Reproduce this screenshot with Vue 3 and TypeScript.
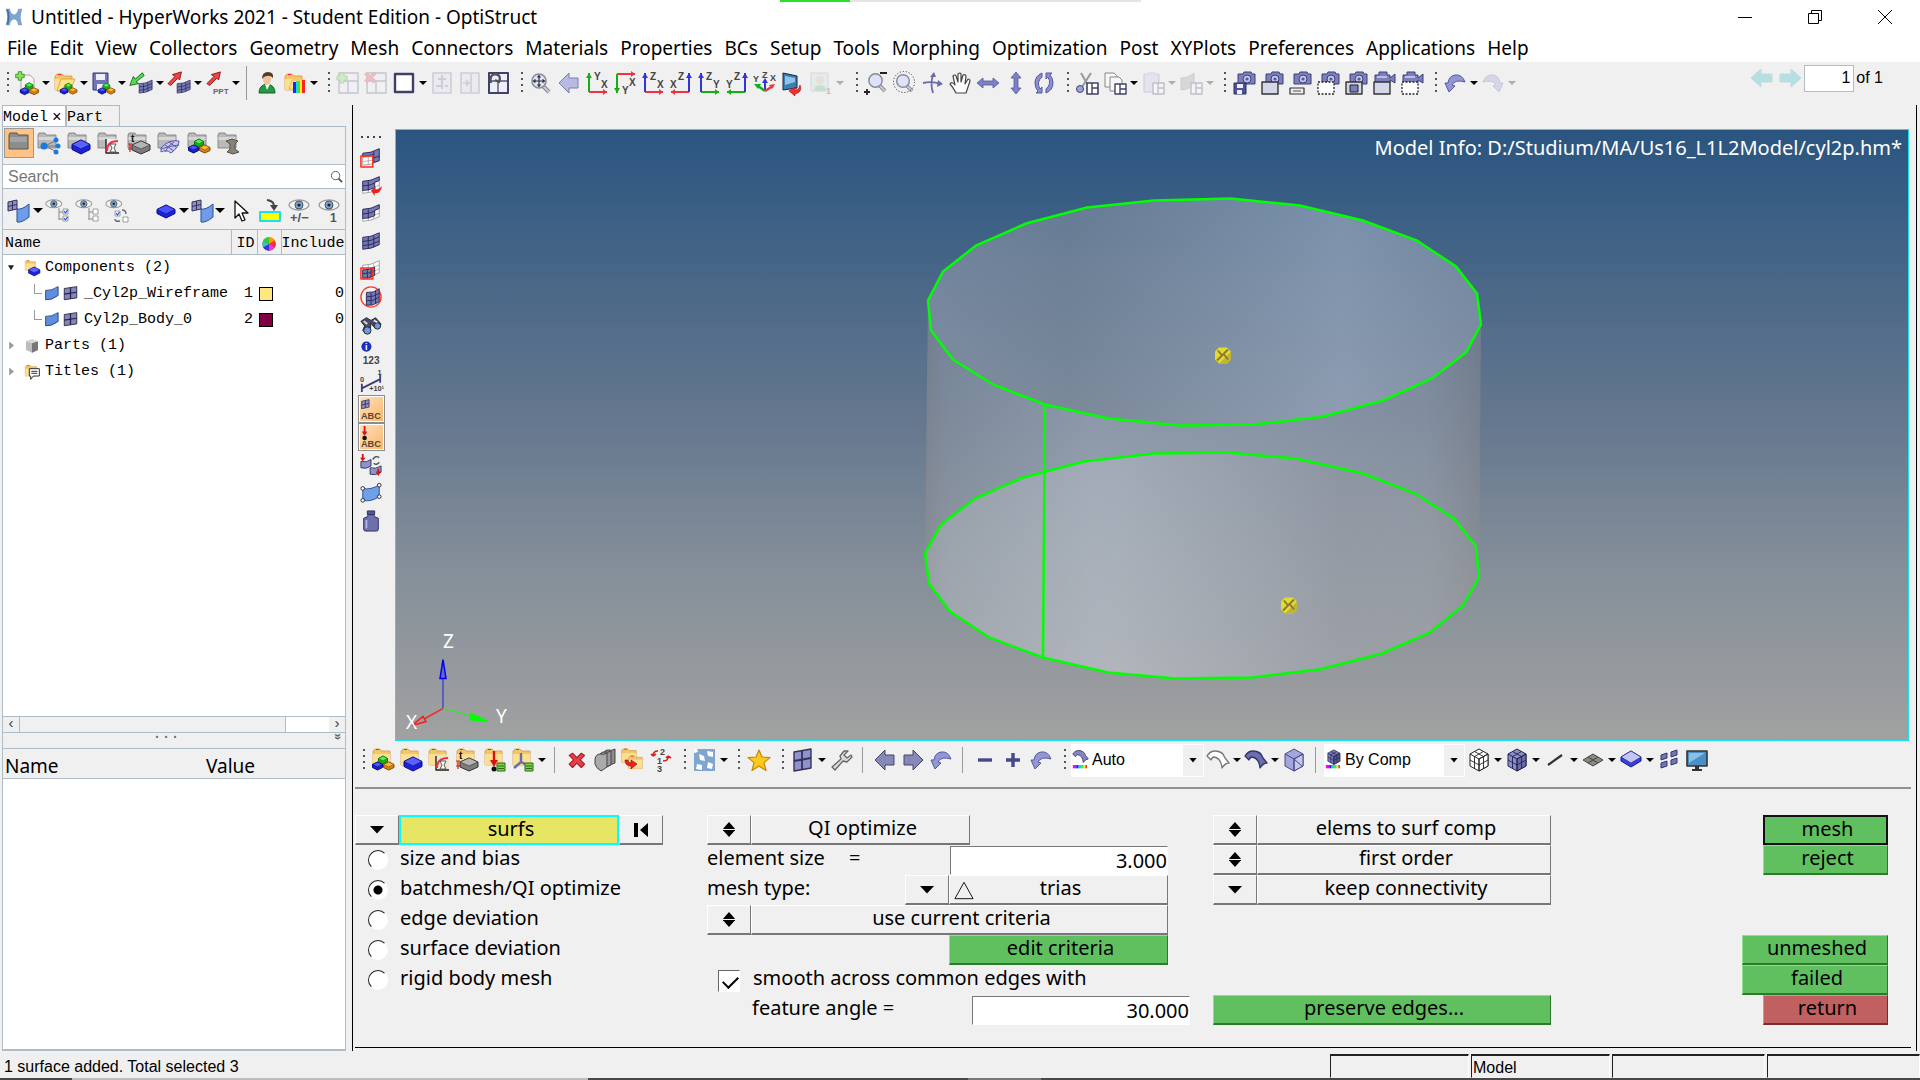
<script setup lang="ts">
import { ref } from 'vue'

type Item =
  | { kind: 'icon'; icon: string; label: string; dim?: boolean }
  | { kind: 'caret'; dim?: boolean }
  | { kind: 'handle' | 'sep' | 'gap' }
  | { kind: 'combo'; icon: string; label: string; width: number; options: string[] }

const icon = (name: string, label: string, dim = false): Item => ({ kind: 'icon', icon: name, label, dim })
const caret: Item = { kind: 'caret' }
const caretDim: Item = { kind: 'caret', dim: true }
const handle: Item = { kind: 'handle' }
const sep: Item = { kind: 'sep' }
const gap: Item = { kind: 'gap' }

/* ---------- icon drawing helpers, all on a 24 x 24 grid ---------- */
const at = (x: number, y: number, s: number, body: string) => `<g transform="translate(${x} ${y}) scale(${s})">${body}</g>`
const path = (d: string, fill: string, stroke = 'none', w = 1) =>
  `<path d="${d}" fill="${fill}" stroke="${stroke}" stroke-width="${w}" stroke-linejoin="round"/>`
const label = (x: number, y: number, size: number, text: string, fill = '#444') =>
  `<text x="${x}" y="${y}" font-size="${size}" font-weight="bold" font-family="Liberation Sans, sans-serif" fill="${fill}">${text}</text>`
const slab = (x: number, y: number, w: number, h: number, d: number, top: string, side: string, edge: string) =>
  path(`M${x} ${y + h / 2}l${w / 2} ${-h / 2}l${w / 2} ${h / 2}v${d}l${-w / 2} ${h / 2}l${-w / 2} ${-h / 2}z`, side, edge) +
  path(`M${x} ${y + h / 2}l${w / 2} ${-h / 2}l${w / 2} ${h / 2}l${-w / 2} ${h / 2}z`, top, edge, 0.6)

const blueSlab = slab(5, 9, 18, 9, 5, '#5a62ff', '#1c22d8', '#0a0a80')
const greySlab = slab(5, 10, 18, 8, 5, '#b4b4b4', '#7c7c7c', '#333')
const trio =
  slab(7.5, 8, 9, 5, 3, '#52ee52', '#17b517', '#0a700a') +
  slab(1.5, 14, 10, 5, 3, '#4a55ff', '#1a22cc', '#0a0a80') +
  slab(12.5, 14, 10.5, 5, 3, '#ffb43c', '#d88510', '#804800')
const folder = path('M2 3l2-2h5l2 2h8v14H2z', '#f3c667', '#d39a3d', 0.8) + path('M2 6h17v11H2z', '#fbdf95') + path('M5 1.5h3', 'none', '#e24', 1)
const greyFolder = path('M1 4l1-2h6l1 2h10v13H1z', '#b9b9b9', '#777', 0.8) + path('M1.5 6h17v3h-17z', '#d6d6d6')
const mesh = (fill = '#7678b4', edge = '#26285a') =>
  path('M3 8q9 0 18-5v13q-9 5-18 5z', fill, edge) + path('M9 7.500v13M15 6v13M3 12.500q9 0 18-5M3 17q9 0 18-5', 'none', edge)
const meshHalf =
  path('M3 8q9 0 18-5v13q-9 5-18 5z', '#fff', '#888', 0.8) + path('M9 7.500v13M15 6v13M3 12.500q9 0 18-5M3 17q9 0 18-5', 'none', '#999', 0.8)
const surf = path('M1 7q5 1 12-5v13q-7 6-12 5z', '#6f9be8', '#27509a')
const gridTile = path('M2 4l9-2v9l-9 2z', '#8f8fc4', '#333358') + path('M6.500 3v9M2 8.500l9-2', 'none', '#333358')
const greenPlus = path('M2 5h3V2h4v3h3v4H9v3H5V9H2z', '#8be05a', '#2f8f1e')
const redCross = path('M2 4l3-2 4 4 4-4 3 2-4 4 4 4-3 3-4-4-4 4-3-3 4-4z', '#e8404a', '#a81822')
const redArrow = path('M1 14l8-8-3-2 10-3-2 9-2-2-8 8z', '#f04444', '#8c1010')
const greenArrow = path('M16 2l-8 7-2-3-4 10 10-2-3-2 9-7z', '#57d957', '#146a14')
const winFrame = path('M3 2h19v20H3z', '#eef', '#55557a', 1.4) + path('M3 10h19M12 10v12', 'none', '#55557a', 1.4)
const lens = path('M14 15l6 6', 'none', '#888', 4) + path('M14 15l6 6', 'none', '#c9c9e6', 2)
const magnifier = lens + '<circle cx="10" cy="10" r="7" fill="#dfe2fb" stroke="#8a8a98" stroke-width="1.600"/>'
const camera = path('M6 3h5l1-2h7l1 2h3v10H6z', '#7d7fbd', '#3d3f78') + '<circle cx="15" cy="8" r="4" fill="#c3c5ea" stroke="#3d3f78"/><circle cx="15" cy="8" r="1.600" fill="#55589a"/>'
const video = path('M3 4h4V1h8v3h3v3l5-4v9l-5-3v3H3z', '#7d7fbd', '#3d3f78') + path('M5 6h10', 'none', '#d6d8f4', 1.4)
const undoShape = path('M2 12l4 9 6-6-3-1q3-6 13-3-3-8-10-7-6 1-7 8z', '#9396d6', '#5557a0')
const eye = '<ellipse cx="11" cy="6" rx="10" ry="5" fill="#f2f2f2" stroke="#999" stroke-width="1.300"/><circle cx="11" cy="6" r="4" fill="#7fa4cf" stroke="#456"/><circle cx="11" cy="6" r="1.600" fill="#223"/>'
const box = (x: number, y: number, on: boolean) =>
  path(`M${x} ${y}h5v5h-5z`, '#fff', '#888', 0.8) + (on ? path(`M${x + 1} ${y + 2}l1.500 2 2-3`, 'none', '#1d4fd0', 1.2) : '')
const cubeFrame = (fill: string, side: string, edge: string) =>
  path('M12 1l9 5v12l-9 5-9-5V6z', fill, edge) + path('M12 11l9-5v12l-9 5z', side, edge) + path('M3 6l9 5 9-5M12 11v12', 'none', edge)
const cubeGrid = (fill: string, side: string, edge: string) =>
  cubeFrame(fill, side, edge) + path('M7.500 3.500l9 5v12M16.500 3.500l-9 5v12M3 12l9 5 9-5', 'none', edge, 0.9)
const spectrum =
  '<rect x="1" y="18" width="4" height="4" fill="#f0f"/><rect x="5" y="18" width="3" height="4" fill="#22f"/><rect x="8" y="18" width="3" height="4" fill="#0dd"/><rect x="11" y="18" width="3" height="4" fill="#3e3"/><rect x="14" y="18" width="2" height="4" fill="#ee2"/><rect x="16" y="18" width="2" height="4" fill="#f33"/>'
const axes = (h: string, v: string, hc: string, vc: string, left: boolean, down = false) => {
  const x = left ? 20 : 4
  const y = down ? 3 : 21
  const hx = left ? 2 : 22
  const vy = down ? 22 : 2
  const a = left ? 4 : -4
  const b = down ? -5 : 5
  return (
    path(`M${x} ${y}H${hx}`, 'none', hc, 2) + path(`M${hx} ${y}l${a} -3v6z`, hc) +
    path(`M${x} ${y}V${vy}`, 'none', vc, 2) + path(`M${x} ${vy}l-3 ${b}h6z`, vc) +
    label(left ? 1 : 16, down ? 15 : 17, 10, h) + label(9, down ? 23 : 9, 10, v)
  )
}
const R = '#ee3340'
const G = '#12b012'
const B = '#3434d8'
const abcTile = label(1, 23, 10, 'ABC', '#5a4632')
const curve = (fill: string, edge: string) => path('M1 8q3-5 8-5 8 0 10 7l4 5q-4 0-7 5Q15 10 8 9q-2 0-3 3z', fill, edge, 1.3)

const icons: Record<string, string> = {
  logo: path('M2 2h5q1 6 5 7 4-1 5-7h5q-2 6-2 10t2 10h-5q-1-7-5-7t-5 7H2q2-6 2-10T2 2z', '#7fa5cf') + path('M4 3q3 9 0 18', 'none', '#3f6ea5', 2),
  newModel: path('M6 4h9l4 4v14H6z', '#f4f4f4', '#aaa') + at(-1, -1, 0.85, greenPlus) + at(4, 5, 0.85, trio),
  open: at(0, 2, 1, folder) + path('M4 20l4-12h14l-5 12z', '#ffe28a', '#d39a3d', 0.8) + at(6, 6, 0.78, trio),
  save: path('M2 2h15v17H2z', '#7276b8', '#33366c') + path('M5 3h9v6H5zM6 13h8v6H6z', '#eef') + at(6, 6, 0.78, trio),
  importIcon: at(8, 7, 0.72, mesh()) + at(-1, 0, 0.9, greenArrow),
  exportIcon: at(8, 7, 0.72, mesh()) + at(0, 0, 0.9, redArrow),
  ppt: at(1, 0, 0.9, redArrow) + label(8, 23, 8, 'PPT', '#666'),
  user: path('M4 22q0-8 8-9 8 1 8 9z', '#249a44', '#12602a') + path('M10 13l2 6 3-6z', '#fff') + '<ellipse cx="12" cy="8" rx="4" ry="6" fill="#eec39a"/>' + path('M7 8q0-7 6-7t5 6q-3-3-6-2-3 0-5 3z', '#5a3a20'),
  results: at(0, 2, 1, folder) + path('M6 18l3-9h13l-4 9z', '#ffe28a', '#d39a3d', 0.6) + path('M10 11h3v11h-3z', '#22f') + path('M13 10h2v12h-2z', '#1dd') + path('M15 10h2v12h-2z', '#4d4') + path('M17 9h2v13h-2z', '#fe2') + path('M19 9h3v13h-3z', '#f22'),
  winAdd: winFrame + at(-1, 0, 1, greenPlus),
  winDel: winFrame + at(-1, 0, 0.8, redCross),
  page: path('M3 3h18v18H3z', '#fff', '#3f4168', 2.4),
  winArrange: path('M3 2h18v20H3z', '#dcdcf0', '#77779a', 1.6) + path('M12 4v14M8 8h8M6 15h6m3 0h3', 'none', '#77779a', 2),
  winSwap: path('M3 2h18v20H3z', '#dcdcf0', '#77779a', 1.6) + path('M13 3v18M5 12h6m-3-3l3 3-3 3', 'none', '#77779a', 1.6),
  winCycle: winFrame + path('M3 2h19v20H3z', 'none', '#3f4168', 2) + path('M5 12q-2-8 4-9 7 1 4 8l-4-2', 'none', '#555', 2.4),
  fit: magnifier + path('M10 5v10M5 10h10M8.500 6.500l1.500-2 1.500 2M8.500 13.500l1.500 2 1.500-2M6.500 8.500l-2 1.500 2 1.500M13.500 8.500l2 1.500-2 1.500', 'none', '#333', 1.2),
  back: path('M2 12L12 2v5h9v10h-9v5z', '#b8bae4', '#7c7eae'),
  forward: path('M22 12L12 2v5H3v10h9v5z', '#8688b8', '#44466e'),
  backDark: path('M2 12L12 2v5h9v10h-9v5z', '#8688b8', '#44466e'),
  xyTop: axes('X', 'Y', R, G, false),
  xyBottom: axes('X', 'Y', R, G, false, true),
  xzLeft: axes('X', 'Z', R, B, false),
  xzRight: axes('X', 'Z', R, B, true),
  yzLeft: axes('Y', 'Z', G, B, false),
  yzRight: axes('Y', 'Z', G, B, true),
  iso: path('M12 19V9', 'none', B, 2) + path('M9 12l3-5 3 5z', B) + path('M12 20l-7-5', 'none', G, 2.4) + path('M1 13l7 0-3 5z', G) + path('M12 20l8-5', 'none', R, 2.4) + path('M22 13l-6 1 3 4z', R) + label(0, 11, 9, 'Y') + label(9, 7, 9, 'Z') + label(17, 10, 9, 'X'),
  screenRed: path('M2 2l14 3v12L2 19z', '#3b7fb6', '#223') + path('M4 5l10 2v4L4 14z', '#8fc5ea') + path('M8 20l6-4v3q4 0 5-5 3 7-5 9v2z', '#f03030', '#a01010', 0.6),
  portrait: path('M2 2h17v18H2z', '#bfe0ea', '#99a') + path('M5 20q0-6 6-6t6 6z', '#6ab27a') + '<circle cx="11" cy="9" r="4" fill="#d8b890"/>' + label(17, 23, 9, '1'),
  zoomPm: at(2, 0, 0.95, magnifier) + path('M16 2h7M0 21h6M3 18v6', 'none', '#222', 1.8),
  zoomCircle: at(2, 1, 0.9, magnifier) + '<circle cx="12" cy="11" r="10.500" fill="none" stroke="#222" stroke-dasharray="1 2"/>',
  rotate: path('M13 4q-3 9 0 18M3 12q9-2 18 1', 'none', '#6a6ca6', 1.8) + path('M10 6l4-5 2 5zM18 9l5 4-6 3z', '#6a6ca6'),
  hand: path('M8 22q-3-6-6-9 2-3 5 1L5 5q2-2 3 0l2 6V3q2-2 3 0v8l2-7q2-1 3 1l-1 8 3-5q2 0 2 2l-4 12z', '#fff', '#444', 1.2),
  horiz: path('M1 12l6-5v3h10V7l6 5-6 5v-3H7v3z', '#7d80c6', '#5557a0', 0.8),
  vert: path('M12 1l5 6h-3v10h3l-5 6-5-6h3V7H7z', '#7d80c6', '#5557a0', 0.8),
  spin: path('M10 2q-7 3-7 10 0 5 3 8l-2 2h6v-6l-2 2q-4-7 2-12z', '#8b8ed0', '#5557a0') + path('M14 22q7-3 7-10 0-5-3-8l2-2h-6v6l2-2q4 7-2 12z', '#8b8ed0', '#5557a0'),
  cut: path('M6 2l8 14M16 2L7 16', 'none', '#999', 2) + '<circle cx="5" cy="18" r="3.500" fill="#9aa4dd" stroke="#446"/>' + path('M12 12h11v11H12z', '#fff', '#3f4168', 1.6) + path('M17 12v11m0-6h6', 'none', '#3f4168', 1.4),
  copy: path('M2 2h9l3 3v11H2z', '#f7f7f7', '#888') + path('M7 6h9l3 3v11H7z', '#f7f7f7', '#888') + path('M12 13h11v10H12z', '#fff', '#3f4168', 1.4) + path('M17 13v10m0-5h6', 'none', '#3f4168', 1.4),
  paste: path('M3 3h15v18H3z', '#c4c6ec', '#77a') + path('M7 1h7v4H7z', '#bbc') + path('M12 12h11v11H12z', '#fff', '#3f4168', 1.4) + path('M17 12v11m0-6h6', 'none', '#3f4168', 1.4),
  pasteMesh: path('M2 7q8 0 13-5v12q-6 5-13 5z', '#999', '#777') + path('M12 12h11v11H12z', '#fff', '#3f4168', 1.4) + path('M17 12v11m0-6h6', 'none', '#3f4168', 1.4),
  camSave: camera + path('M2 12h12v11H2z', '#4e5196', '#2b2d60') + path('M5 13h6v4H5zM5 19h5v4H5z', '#eef'),
  camPage: camera + path('M2 11h16v12H2z', '#d2d8e8', '#333', 1.4),
  camKey: camera + path('M2 17h14v6H2z', '#eee', '#333', 1.2) + path('M5 20h8', 'none', '#555'),
  camDash: camera + '<path d="M2 11h16v12H2z" fill="#fff" stroke="#222" stroke-width="1.300" stroke-dasharray="2 1.500"/>',
  camInner: camera + path('M2 11h16v12H2z', '#d2d8e8', '#333', 1.4) + path('M6 14h8v7H6z', '#7d7fbd', '#223'),
  vidPage: video + path('M2 11h16v12H2z', '#d2d8e8', '#333', 1.4),
  vidDash: video + '<path d="M2 11h16v12H2z" fill="#fff" stroke="#222" stroke-width="1.300" stroke-dasharray="2 1.500"/>',
  undo: undoShape,
  redo: `<g transform="translate(24 0) scale(-1 1)">${undoShape}</g>`,
  prevPage: path('M1 12L11 3v5h11v8H11v5z', '#9ed8dc', '#a9d3d8'),
  nextPage: path('M23 12L13 3v5H2v8h11v5z', '#9ed8dc', '#a9d3d8'),

  fPlain: path('M2 4l1-2h7l1 2h10v14H2z', '#8d8d8d', '#555') + path('M3 6h17v5H3z', '#a4a4a4'),
  fNodes: greyFolder + path('M8 15l12-6M8 15h13M8 15l12 6', 'none', '#777') + '<circle cx="7" cy="15" r="3.500" fill="#1a7ae0"/><circle cx="19" cy="9" r="2.500" fill="#1a7ae0"/><circle cx="21" cy="15" r="2.500" fill="#1a7ae0"/><circle cx="19" cy="21" r="2.500" fill="#1a7ae0"/>',
  fBlock: greyFolder + blueSlab,
  fMat: greyFolder + path('M9 8h13v15H9z', '#eee') + path('M9 8v14h13', 'none', '#222', 1.4) + path('M10 20q0-10 11-10', 'none', R, 2) + path('M13 13h6l-2 4 2 4h-6l2-4z', '#fff', '#555'),
  fProp: greyFolder + greySlab + label(4, 11, 10, 't', '#111') + path('M3 13v8M1 13h4M1 18h4', 'none', '#c22', 1.2),
  fMesh: greyFolder + path('M4 17q8-9 18-7 0 6-8 12-5-4-10-1z', '#c8c8f2', '#5a5aa6') + path('M8 14l9 6M12 11l7 5M8 21q3-7 9-10M4 18q8-3 18-4', 'none', '#5a5aa6'),
  fTrio: greyFolder + trio,
  fBeam: greyFolder + path('M9 10l6-2 6 2-3 3v5l4 3-6 2-6-2 3-3v-5z', '#8a807c', '#554'),

  surfMesh: at(10, 3, 1, surf) + at(0, -1, 1, gridTile),
  eyeOn: at(-1, 0, 0.8, eye) + path('M13 9v12M13 13h4M13 20h4', 'none', '#888') + box(17, 10, true) + box(17, 17, true),
  eyeOff: at(-1, 0, 0.8, eye) + path('M13 9v12M13 13h4M13 20h4', 'none', '#888') + box(17, 10, false) + box(17, 17, false),
  eyeFlip: at(-1, 0, 0.8, eye) + box(9, 12, true) + box(17, 18, false) + path('M16 11q4 0 4 4M9 20q0 3 5 2', 'none', '#666', 1.4),
  block: slab(3, 6, 18, 9, 4, '#4a52ff', '#1c22d8', '#0a0a80'),
  cursor: path('M7 2v17l4-4 3 7 3-1-3-7h6z', '#fff', '#111', 1.3),
  highlight: path('M2 13h20v9H2z', '#ffff00', '#18e0f0', 2) + path('M9 1q7 1 7 6', 'none', '#444', 2) + path('M12 6h8l-4 6z', '#444'),
  eyePm: eye + label(2, 23, 13, '+/−', '#555'),
  eyeOne: eye + label(12, 23, 12, '1', '#555'),
  wheel: '<circle cx="12" cy="12" r="10" fill="#e33"/>' + path('M12 12V2a10 10 0 0 1 8.700 5z', '#f90') + path('M12 12l8.700-5a10 10 0 0 1 0 10z', '#e33') + path('M12 12l8.700 5a10 10 0 0 1-8.700 5z', '#e3e') + path('M12 12v10a10 10 0 0 1-8.700-5z', '#33e') + path('M12 12l-8.700 5a10 10 0 0 1 0-10z', '#2cc') + path('M12 12L3.300 7A10 10 0 0 1 12 2z', '#3c3'),
  rowComp: at(0, 0, 0.9, folder) + at(2, 2, 0.95, blueSlab),
  rowSurf: path('M1 7q9 1 20-6v14q-10 8-20 7z', '#5f8ee0', '#223f7a', 1.4),
  rowMesh: path('M2 4l20-3v18L2 22z', '#8585bb', '#222244', 1.4) + path('M12 2.500v18M2 13l20-3', 'none', '#222244', 2),
  rowPart: path('M12 2l9 3v13l-9 4-9-4V5z', '#bdbdbd') + path('M12 6l9-1v13l-9 4z', '#777') + path('M3 5l9-3 9 3-9 3z', '#d8d8d8'),
  rowTitle: at(0, 1, 1, folder) + path('M8 7h15v11H14l-4 5v-5H8z', '#fff', '#222', 1.4) + path('M11 11h9M11 14h9', 'none', '#222', 1.4),

  mMaskBox: meshHalf + path('M3 8q9 0 18-5v13l-6 2V9q-6 2-12 2z', '#7678b4', '#26285a') + path('M15 13l6-2M15 6v3', 'none', '#26285a') + path('M1 11h13v12H1z', 'none', '#ff2a10', 1.6),
  mMaskRed: meshHalf + path('M3 8q9 0 18-5v4l-5 2v6q-7 3-13 3z', '#7678b4', '#26285a') + path('M9 8v10M3 13q7 0 13-3', 'none', '#26285a') + path('M12 18l5-4v3q4 0 7-4-1 8-8 8v3z', '#f02020'),
  mMaskHalf: meshHalf + path('M3 8q9 0 18-5v4l-5 2v6q-7 3-13 3z', '#7678b4', '#26285a') + path('M9 8v10M3 13q7 0 13-3', 'none', '#26285a'),
  mMesh: mesh(),
  mUnmask: meshHalf + path('M3 13q8 0 13-3v9q-6 4-13 3z', '#7678b4', '#26285a') + path('M8 13v9M12 12v9M3 17q8 0 13-3', 'none', '#26285a') + path('M1 11h13v12H1z', 'none', '#ff2a10', 1.6),
  mCircle: '<circle cx="12" cy="12" r="11" fill="#f4f4f4" stroke="#ff3a28" stroke-width="1.500"/>' + path('M7 7q8 1 14-4v14q-6 5-14 4z', '#7678b4', '#26285a') + path('M12 7v14M17 5v14M7 12q8 0 14-4M7 16q8 1 14-4', 'none', '#26285a'),
  binoc: path('M1 8l6-4 5 3 5-3 6 7-3 5-5-2-3-4-1 9-5 2-3-3 2-5z', '#4a4a6c', '#222') + '<circle cx="8" cy="18" r="4" fill="#6f9bd8" stroke="#222"/><circle cx="19" cy="13" r="3.500" fill="#6f9bd8" stroke="#222"/>' + path('M4 8l4 3M15 7l4 2', 'none', '#ddd', 2),
  info123: '<circle cx="7" cy="5" r="5.500" fill="#1c2fb8"/>' + label(5.5, 9, 10, 'i', '#fff') + label(3, 24, 11, '123'),
  scaleBar: path('M2 15v9M22 5v9M2 20L22 10', 'none', '#3d3f78', 2) + label(0, 13, 8, '0') + label(19, 5, 8, '1') + label(10, 23, 8, '+10¹'),
  abcMesh: abcTile + at(0, 0, 0.9, gridTile),
  abcLoad: abcTile + path('M5 0v9', 'none', '#d11', 2) + path('M2 6h6l-3 5z', '#d11') + '<circle cx="5" cy="13" r="2.500" fill="#111"/>',
  loads: path('M1 8q6 2 11-2v7q-5 4-11 2z', '#8f92cc', '#333358') + path('M11 15q6 2 12-2v7q-6 4-12 2z', '#8f92cc', '#333358') + path('M3 0v6M20 16v5', 'none', '#d11', 2) + path('M0 4h6l-3 4zM17 19h6l-3 5z', '#d11') + path('M14 6q3-5 7-2M21 9q-3 4-6 1', 'none', '#555', 1.6),
  surfPts: path('M3 7q9 2 18-4v13q-9 6-18 4z', '#6f9fe6', '#27509a') + '<g fill="#fff" stroke="#222"><circle cx="3" cy="7" r="2"/><circle cx="21" cy="3.500" r="2"/><circle cx="3" cy="20" r="2"/><circle cx="21" cy="16" r="2"/></g>',
  bottle: path('M8 1h8v4H8z', '#55588c', '#2b2d60') + path('M9 5h6q0 3 5 4v12q0 2-2 2H6q-2 0-2-2V9q5-1 5-4z', '#6d70aa', '#2b2d60') + path('M7 11v9', 'none', '#b5b7e4', 2),

  yTrio: folder + trio,
  yBlock: folder + blueSlab,
  yMat: folder + path('M9 8h13v15H9z', '#f0e6cf') + path('M9 8v14h13', 'none', '#222', 1.4) + path('M10 20q0-10 11-10', 'none', R, 2) + path('M13 13h6l-2 4 2 4h-6l2-4z', '#fff', '#555'),
  yProp: folder + greySlab + label(4, 11, 10, 't', '#111') + path('M3 13v8M1 13h4M1 18h4', 'none', '#c22', 1.2),
  yLoad: folder + path('M11 3v12', 'none', '#d11', 2.4) + path('M7 12h8l-4 7z', '#d11') + '<circle cx="11" cy="21" r="2.500" fill="#111"/>' + path('M14 15h8v8h-8z', '#7ad04a', '#2a6a10') + path('M15 18h6M15 20.500h6', 'none', '#2a6a10'),
  yAxis: folder + path('M10 5v9l-7 6M10 14l6 3', 'none', '#6a6ca6', 2.4) + path('M14 15h8v8h-8z', '#7ad04a', '#2a6a10') + path('M15 18h6M15 20.500h6', 'none', '#2a6a10'),
  del: at(2, 3, 1.1, redCross),
  cards: path('M10 7q1-5 5-5 4 1 7-1v14q-4 1-8 4z', '#8a8a8a', '#444') + path('M6 9q1-5 5-5 4 1 7-1v14q-4 1-8 4z', '#9a9a9a', '#444') + path('M2 11q1-5 5-5 4 1 7-1v14q-4 3-6 4-5-3-6-7z', '#aaa', '#444'),
  moveFolder: at(-1, 0, 0.85, folder) + at(6, 7, 0.8, folder) + path('M4 12q0 6 6 6v3l6-5-6-4v3q-3 0-3-3z', '#f02020', '#900', 0.6),
  order: label(11, 7, 9, '2') + label(8, 16, 9, '1') + label(8, 24, 9, '3') + path('M9 3q-5 0-5 5m0 0l-2-2m2 2l3-2M14 13q6 0 5-5m0 0l-2 2m2-2l3 2', 'none', '#e01818', 1.6),
  tiles: path('M1 1h21v22H1z', '#7ea6cf') + path('M6 6l5 2 1 5-5-1zM14 3l6 1 0 5-5-1zM15 14l5 2-1 5-5-1zM4 16l5 1v5l-6-1zM1 1h3l1 3-4 1z', '#fff'),
  star: path('M12 2l3 7 8 .600-6 5 2 8-7-4.600L5 22.600l2-8-6-5L9 9z', '#ffc81e', '#c48a00', 1.2),
  bigGrid: path('M3 4l17-3v19L3 23z', '#8f92cc', '#333358', 1.4) + path('M11 3v19M3 13l17-3', 'none', '#333358', 1.8),
  wrench: path('M15 3l-4 5 1 3-9 8 3 3 8-9 4 1 5-5-1-2-4 3-3-3 4-4z', '#d9d9d9', '#666', 1.3),
  minus: path('M5 12h14', 'none', '#44478a', 3.4),
  plus: path('M5 12h14M12 5v14', 'none', '#44478a', 3.4),
  curveWhite: curve('#fff', '#777'),
  curveFill: curve('#6a6dae', '#33356a'),
  cubeGlass: cubeFrame('#a3a6dc', '#c6c8ea', '#44478a') + path('M12 11l9 8', 'none', '#44478a'),
  autoIcon: at(0, -2, 0.85, curve('#8486c2', '#3c3e74')) + spectrum,
  compIcon: at(1, -1, 0.8, cubeGrid('#7679ba', '#55588f', '#22244e')) + spectrum,
  cubeWire: cubeGrid('#fff', '#fff', '#222'),
  cubeMesh: cubeGrid('#8b8ec8', '#6a6da8', '#22244e'),
  line: path('M5 17L19 7', 'none', '#333', 2.2),
  greyPlate: path('M2 12l10-6 10 6-10 6z', '#8a8a84', '#444') + path('M7 9l10 6M17 9L7 15', 'none', '#444'),
  bluePlate: slab(2, 3, 20, 12, 4, '#c3c6f2', '#3a40dd', '#14188c'),
  shards: '<g fill="#7275b4" stroke="#33356a"><path d="M4 7l6-2v5l-6 2zM14 4l6-2v5l-6 2zM4 15l6-2v5l-6 2zM14 12l6-2v5l-6 2z"/></g>',
  monitor: path('M2 3h20v15H2z', '#4a90c4', '#333', 1.6) + path('M4 5h16L4 15z', '#86c0e6') + path('M10 18h4v3h3v2H7v-2h3z', '#333'),
}

const menus = ['File', 'Edit', 'View', 'Collectors', 'Geometry', 'Mesh', 'Connectors', 'Materials', 'Properties', 'BCs', 'Setup', 'Tools', 'Morphing', 'Optimization', 'Post', 'XYPlots', 'Preferences', 'Applications', 'Help']

const topTools: Item[] = [
  handle, icon('newModel', 'New model'), caret, icon('open', 'Open model'), caret, icon('save', 'Save model'), caret,
  icon('importIcon', 'Import'), caret, icon('exportIcon', 'Export'), caret, icon('ppt', 'Publish'), caret, sep,
  icon('user', 'User profiles'), icon('results', 'Load results'), caret,
  handle, icon('winAdd', 'Add page', true), icon('winDel', 'Delete page', true), icon('page', 'Page layout'), caret,
  icon('winArrange', 'Expand window', true), icon('winSwap', 'Swap windows', true), icon('winCycle', 'Cycle windows'),
  handle, icon('fit', 'Fit'), icon('back', 'Previous view'), icon('xyTop', 'XY top'), icon('xyBottom', 'XY bottom'),
  icon('xzLeft', 'XZ left'), icon('xzRight', 'XZ right'), icon('yzLeft', 'YZ rear'), icon('yzRight', 'YZ front'),
  icon('iso', 'Isometric'), icon('screenRed', 'Reverse view'), icon('portrait', 'User views', true), caretDim, gap,
  handle, icon('zoomPm', 'Zoom'), icon('zoomCircle', 'Circle zoom'), icon('rotate', 'Rotate'), icon('hand', 'Pan'),
  icon('horiz', 'Horizontal'), icon('vert', 'Vertical'), icon('spin', 'Spin'),
  handle, icon('cut', 'Cut'), icon('copy', 'Copy'), caret, icon('paste', 'Paste', true), caretDim, icon('pasteMesh', 'Overlay', true), caretDim,
  handle, icon('camSave', 'Save image'), icon('camPage', 'Capture page'), icon('camKey', 'Capture panel'), icon('camDash', 'Capture area'),
  icon('camInner', 'Capture window'), icon('vidPage', 'Record page'), icon('vidDash', 'Record area'),
  handle, icon('undo', 'Undo'), caret, icon('redo', 'Redo', true), caretDim,
]

const bottomTools: Item[] = [
  handle, icon('yTrio', 'Assemblies'), icon('yBlock', 'Components'), icon('yMat', 'Materials'), icon('yProp', 'Properties'),
  icon('yLoad', 'Load collectors'), icon('yAxis', 'Systems'), caret, sep,
  icon('del', 'Delete'), icon('cards', 'Card edit'), icon('moveFolder', 'Organize'), icon('order', 'Renumber'),
  handle, icon('tiles', 'Geometry'), caret, handle, icon('star', 'Favorites'),
  handle, icon('bigGrid', 'Mesh'), caret, icon('wrench', 'Options'), sep,
  icon('backDark', 'Back'), icon('forward', 'Forward'), icon('undo', 'Revert'), sep,
  icon('minus', 'Less'), icon('plus', 'More'), icon('undo', 'Reset'), handle,
  { kind: 'combo', icon: 'autoIcon', label: 'Geometry color mode', width: 133, options: ['Auto', 'By Comp', 'By Topo'] },
  icon('curveWhite', 'Wireframe geometry'), caret, icon('curveFill', 'Shaded geometry'), caret, icon('cubeGlass', 'Transparency'), sep,
  { kind: 'combo', icon: 'compIcon', label: 'Element color mode', width: 141, options: ['By Comp', 'By Prop', 'By Mat'] },
  icon('cubeWire', 'Wireframe elements'), caret, icon('cubeMesh', 'Shaded elements'), caret, icon('line', '1D elements'), caret,
  icon('greyPlate', '2D elements'), caret, icon('bluePlate', '3D elements'), caret, icon('shards', 'Shrink elements'), icon('monitor', 'Visualization options'),
]

const sideTools = [
  ['mMaskBox', 'Mask'], ['mMaskRed', 'Reverse mask'], ['mMaskHalf', 'Unmask adjacent'], ['mMesh', 'Unmask all'], ['mUnmask', 'Unmask shown'],
  ['mCircle', 'Spherical clipping'], ['binoc', 'Find'], ['info123', 'Numbers'], ['scaleBar', 'Distance'], ['abcMesh', 'Element handles'],
  ['abcLoad', 'Load handles'], ['loads', 'Load visuals'], ['surfPts', 'Surface points'], ['bottle', 'Mass'],
]

const viewTabs = ['fPlain', 'fNodes', 'fBlock', 'fMat', 'fProp', 'fMesh', 'fTrio', 'fBeam']

const treeRows = [
  { name: '_Cyl2p_Wireframe', id: 1, color: '#ffe680', include: 0 },
  { name: 'Cyl2p_Body_0', id: 2, color: '#800040', include: 0 },
]

const methods = ['size and bias', 'batchmesh/QI optimize', 'edge deviation', 'surface deviation', 'rigid body mesh']
const method = ref('batchmesh/QI optimize')
const elementSize = ref('3.000')
const featureAngle = ref('30.000')
const smooth = ref(true)
const search = ref('')
const page = ref('1')

const topRing = '1154,200 1231,198 1300,205 1363,220 1417,240 1456,266 1477,293 1481,324 1466,352 1432,378 1383,400 1323,416 1254,424 1181,425 1109,418 1045,404 993,384 953,359 931,330 928,300 943,271 976,245 1026,223 1087,207'
const bottomRing = '1154,453 1227,452 1296,458 1363,473 1415,493 1454,518 1476,546 1479,577 1463,605 1430,632 1382,653 1319,669 1252,677 1175,678 1108,672 1043,657 989,637 950,611 929,583 925,553 941,524 975,498 1023,477 1084,461'
const wall = '928,300 931,330 953,359 993,384 1045,404 1109,418 1181,425 1254,424 1323,416 1383,400 1432,378 1466,352 1481,324 1479,577 1463,605 1430,632 1382,653 1319,669 1252,677 1175,678 1108,672 1043,657 989,637 950,611 929,583 925,553'
const markers = [[1223, 355], [1289, 605]]
</script>

<template>
  <div class="app">
    <header class="titlebar">
      <div class="progress"><i class="done"></i><i class="rest"></i></div>
      <svg class="ico logo" viewBox="0 0 24 24" v-html="icons.logo"></svg>
      <h1>Untitled - HyperWorks 2021 - Student Edition - OptiStruct</h1>
      <div class="win">
        <button aria-label="Minimize"><svg viewBox="0 0 16 16"><path d="M1 8.500h14" stroke="#000" /></svg></button>
        <button aria-label="Restore"><svg viewBox="0 0 16 16"><path d="M1.500 4.500h10v10h-10zM4.500 4.500v-3h10v10h-3" fill="none" stroke="#000" /></svg></button>
        <button aria-label="Close"><svg viewBox="0 0 16 16"><path d="M1 1l14 14M15 1L1 15" stroke="#000" /></svg></button>
      </div>
    </header>

    <nav class="menubar">
      <button v-for="m in menus" :key="m">{{ m }}</button>
    </nav>

    <div class="toolbar top">
      <template v-for="(t, i) in topTools" :key="i">
        <button v-if="t.kind === 'icon'" class="tool" :class="{ dim: t.dim }" :aria-label="t.label">
          <svg class="ico" viewBox="0 0 24 24" v-html="icons[t.icon]"></svg>
        </button>
        <span v-else-if="t.kind === 'caret'" class="caret" :class="{ dim: t.dim }"></span>
        <span v-else :class="t.kind"></span>
      </template>
      <div class="pager">
        <button class="tool dimArrow" aria-label="Previous page"><svg class="ico" viewBox="0 0 24 24" v-html="icons.prevPage"></svg></button>
        <button class="tool dimArrow" aria-label="Next page"><svg class="ico" viewBox="0 0 24 24" v-html="icons.nextPage"></svg></button>
        <input id="page" v-model="page" type="text" />
        <label for="page">of 1</label>
      </div>
    </div>

    <main class="main">
      <aside class="browser">
        <div class="tabs">
          <button class="tab on">Model<span class="x">×</span></button>
          <button class="tab">Part</button>
        </div>
        <div class="frame">
          <div class="views">
            <button v-for="(v, i) in viewTabs" :key="v" :class="{ sel: i === 0 }" :aria-label="v">
              <svg class="ico" viewBox="0 0 24 24" v-html="icons[v]"></svg>
            </button>
          </div>
          <div class="search">
            <input v-model="search" type="text" placeholder="Search" aria-label="Search" />
            <svg viewBox="0 0 14 14"><circle cx="6" cy="6" r="4.500" fill="none" stroke="#555" /><path d="M9 9l4 4" stroke="#555" stroke-width="2" /></svg>
          </div>
          <div class="filters">
            <button class="tool" aria-label="Entities"><svg class="ico" viewBox="0 0 24 24" v-html="icons.surfMesh"></svg></button><span class="caret"></span>
            <button class="tool" aria-label="Show all"><svg class="ico" viewBox="0 0 24 24" v-html="icons.eyeOn"></svg></button>
            <button class="tool" aria-label="Hide all"><svg class="ico" viewBox="0 0 24 24" v-html="icons.eyeOff"></svg></button>
            <button class="tool" aria-label="Flip shown"><svg class="ico" viewBox="0 0 24 24" v-html="icons.eyeFlip"></svg></button>
            <span class="push"></span>
            <button class="tool narrow" aria-label="Components"><svg class="ico" viewBox="0 0 24 24" v-html="icons.block"></svg></button><span class="caret"></span>
            <button class="tool narrow" aria-label="Geometry and elements"><svg class="ico" viewBox="0 0 24 24" v-html="icons.surfMesh"></svg></button><span class="caret"></span>
            <button class="tool" aria-label="Selector"><svg class="ico" viewBox="0 0 24 24" v-html="icons.cursor"></svg></button>
            <button class="tool" aria-label="Make current"><svg class="ico" viewBox="0 0 24 24" v-html="icons.highlight"></svg></button>
            <button class="tool" aria-label="Add or remove"><svg class="ico" viewBox="0 0 24 24" v-html="icons.eyePm"></svg></button>
            <button class="tool" aria-label="Isolate"><svg class="ico" viewBox="0 0 24 24" v-html="icons.eyeOne"></svg></button>
          </div>
          <div class="tree">
            <table>
              <colgroup><col /><col class="cId" /><col class="cColor" /><col class="cInc" /></colgroup>
              <thead>
                <tr>
                  <th>Name</th>
                  <th class="r">ID</th>
                  <th class="c"><svg class="mini" viewBox="0 0 24 24" v-html="icons.wheel"></svg></th>
                  <th>Include</th>
                </tr>
              </thead>
              <tbody>
                <tr>
                  <td colspan="4"><div class="node root"><i class="twist open"></i><svg class="mini" viewBox="0 0 24 24" v-html="icons.rowComp"></svg>Components (2)</div></td>
                </tr>
                <tr v-for="r in treeRows" :key="r.id">
                  <td><div class="node leaf"><svg class="mini" viewBox="0 0 24 24" v-html="icons.rowSurf"></svg><svg class="mini" viewBox="0 0 24 24" v-html="icons.rowMesh"></svg>{{ r.name }}</div></td>
                  <td class="r id">{{ r.id }}</td>
                  <td><span class="swatch" :style="{ background: r.color }"></span></td>
                  <td class="r inc">{{ r.include }}</td>
                </tr>
                <tr>
                  <td colspan="4"><div class="node root"><i class="twist"></i><svg class="mini" viewBox="0 0 24 24" v-html="icons.rowPart"></svg>Parts (1)</div></td>
                </tr>
                <tr>
                  <td colspan="4"><div class="node root"><i class="twist"></i><svg class="mini" viewBox="0 0 24 24" v-html="icons.rowTitle"></svg>Titles (1)</div></td>
                </tr>
              </tbody>
            </table>
          </div>
          <div class="hscroll"><button aria-label="Scroll left">‹</button><i></i><button aria-label="Scroll right">›</button></div>
          <div class="splitter"><span>···</span><b>»</b></div>
          <table class="props">
            <thead><tr><th>Name</th><th>Value</th></tr></thead>
          </table>
          <div class="propsBody"></div>
        </div>
      </aside>

      <section class="work">
        <div class="canvasRow">
          <div class="sidebar">
            <span class="dots"></span>
            <button v-for="s in sideTools" :key="s[0]" :aria-label="s[1]" :class="{ sel: s[0].startsWith('abc') }">
              <svg class="ico" viewBox="0 0 24 24" v-html="icons[s[0]]"></svg>
            </button>
          </div>
          <div class="viewport">
            <svg class="scene" viewBox="396 130 1512 609" preserveAspectRatio="xMidYMid meet">
              <defs>
                <linearGradient id="wallFill" x1="0" x2="1">
                  <stop offset="0" stop-color="#8c8c90" stop-opacity=".55" />
                  <stop offset=".04" stop-color="#9ba1aa" stop-opacity=".45" />
                  <stop offset=".3" stop-color="#bac0ca" stop-opacity=".46" />
                  <stop offset=".6" stop-color="#b4bac4" stop-opacity=".44" />
                  <stop offset=".9" stop-color="#a8adb6" stop-opacity=".42" />
                  <stop offset="1" stop-color="#8a8a8e" stop-opacity=".5" />
                </linearGradient>
                <linearGradient id="lidFill" x1="0" x2="1">
                  <stop offset="0" stop-color="#a0a6b4" stop-opacity=".5" />
                  <stop offset=".25" stop-color="#929aa5" stop-opacity=".5" />
                  <stop offset=".75" stop-color="#b0bbcc" stop-opacity=".55" />
                  <stop offset="1" stop-color="#a2abba" stop-opacity=".5" />
                </linearGradient>
                <linearGradient id="baseFill" x1="0" x2="1">
                  <stop offset="0" stop-color="#c0c3cb" stop-opacity=".3" />
                  <stop offset=".35" stop-color="#c8cbd2" stop-opacity=".3" />
                  <stop offset=".75" stop-color="#94949c" stop-opacity=".3" />
                  <stop offset="1" stop-color="#a0a0a6" stop-opacity=".25" />
                </linearGradient>
              </defs>
              <polygon :points="wall" fill="url(#wallFill)" />
              <polygon :points="topRing" fill="url(#lidFill)" />
              <polygon :points="bottomRing" fill="url(#baseFill)" />
              <g fill="none" stroke="#0f0" stroke-width="2.500">
                <polygon :points="bottomRing" />
                <polygon :points="topRing" />
                <path d="M1045 404L1043 657" />
              </g>
              <g v-for="m in markers" :key="m[0]" :transform="`translate(${m[0]} ${m[1]})`">
                <path d="M-4-8H4L8-4 8 4 4 8H-4L-8 4-8-4z" fill="#e2dc2c" />
                <path d="M8-4V4L4 8H-4L6-2z" fill="#c2b630" />
                <path d="M-6 5L5-6M-5-5L-1 0M1-1L5 4" stroke="#8c7a34" stroke-width="2" />
              </g>
              <path d="M443 708V663" stroke="#4646d8" stroke-width="1.500" />
              <path d="M440 678l3-19 3 19z" fill="#6666c8" stroke="#0000f0" stroke-width="1.500" />
              <path d="M443 708l-18 10" stroke="#f03030" stroke-width="1.500" />
              <path d="M412 725l11-9 3 5z" fill="none" stroke="#ff1818" stroke-width="1.500" />
              <path d="M443 708l28 8" stroke="#20f020" stroke-width="1.500" stroke-dasharray="5 2" />
              <path d="M488 721l-17-8-1 6z" fill="#0f0" stroke="#0f0" stroke-width="1.500" />
              <g fill="#fff" font-family="Noto Sans, sans-serif" font-size="19">
                <text x="443" y="647">Z</text>
                <text x="406" y="728">X</text>
                <text x="496" y="722">Y</text>
              </g>
            </svg>
            <p class="info">Model Info: D:/Studium/MA/Us16_L1L2Model/cyl2p.hm*</p>
          </div>
        </div>

        <div class="toolbar bottom">
          <template v-for="(t, i) in bottomTools" :key="i">
            <button v-if="t.kind === 'icon'" class="tool" :aria-label="t.label">
              <svg class="ico" viewBox="0 0 24 24" v-html="icons[t.icon]"></svg>
            </button>
            <span v-else-if="t.kind === 'caret'" class="caret"></span>
            <div v-else-if="t.kind === 'combo'" class="combo" :style="{ width: t.width + 'px' }">
              <svg class="ico" viewBox="0 0 24 24" v-html="icons[t.icon]"></svg>
              <select :aria-label="t.label"><option v-for="o in t.options" :key="o">{{ o }}</option></select>
              <span class="caret"></span>
            </div>
            <span v-else :class="t.kind"></span>
          </template>
        </div>

        <form class="panel" @submit.prevent>
          <div class="col one">
            <div class="line">
              <button class="btn sw" aria-label="Entity type"><i class="down"></i></button>
              <button class="btn surfs">surfs</button>
              <button class="btn sw" aria-label="Reset selection"><svg class="reset" viewBox="0 0 16 16"><path d="M1 1h4v14H1zM15 1v14L7 8z" /></svg></button>
            </div>
            <label v-for="m in methods" :key="m" class="line radio"><input v-model="method" type="radio" name="method" :value="m" />{{ m }}</label>
          </div>

          <div class="col two">
            <div class="line">
              <button class="btn sw" aria-label="Switch mode"><i class="updown"></i></button>
              <button class="btn qi">QI optimize</button>
            </div>
            <div class="line">
              <label for="esize" class="grow">element size<span class="eq">=</span></label>
              <input id="esize" v-model="elementSize" class="num" type="text" />
              <span class="pad"></span>
            </div>
            <div class="line">
              <span class="grow">mesh type:</span>
              <button class="btn sw" aria-label="Choose mesh type"><i class="down"></i></button>
              <button class="btn trias"><svg class="tri" viewBox="0 0 22 20"><path d="M11 1l10 18H1z" fill="none" stroke="#000" /></svg>trias</button>
              <span class="pad"></span>
            </div>
            <div class="line">
              <button class="btn sw" aria-label="Switch criteria"><i class="updown"></i></button>
              <button class="btn grow">use current criteria</button>
              <span class="pad"></span>
            </div>
            <div class="line end">
              <button class="btn green criteria">edit criteria</button>
              <span class="pad"></span>
            </div>
            <label class="line check"><input v-model="smooth" type="checkbox" />smooth across common edges with</label>
            <div class="line feature">
              <label for="fangle" class="grow">feature angle =</label>
              <input id="fangle" v-model="featureAngle" class="num" type="text" />
            </div>
          </div>

          <div class="col three">
            <div class="line"><button class="btn sw" aria-label="Switch destination"><i class="updown"></i></button><button class="btn grow">elems to surf comp</button></div>
            <div class="line"><button class="btn sw" aria-label="Switch order"><i class="updown"></i></button><button class="btn grow">first order</button></div>
            <div class="line"><button class="btn sw" aria-label="Choose connectivity"><i class="down"></i></button><button class="btn grow">keep connectivity</button></div>
            <div class="line"></div>
            <div class="line"></div>
            <div class="line"></div>
            <div class="line"><button class="btn green grow">preserve edges...</button></div>
          </div>

          <div class="col four">
            <div class="line end"><button class="btn green short focus">mesh</button></div>
            <div class="line end"><button class="btn green short">reject</button></div>
            <div class="line"></div>
            <div class="line"></div>
            <div class="line"><button class="btn green grow">unmeshed</button></div>
            <div class="line"><button class="btn green grow">failed</button></div>
            <div class="line end"><button class="btn red short">return</button></div>
          </div>
        </form>
      </section>
    </main>

    <footer class="status">
      <p>1 surface added. Total selected 3</p>
      <span class="cell a"></span>
      <span class="cell a">Model</span>
      <span class="cell b"></span>
      <span class="cell b"></span>
    </footer>
    <div class="edge"><i class="d1"></i><i class="l1"></i><i class="d2"></i><i class="l2"></i></div>
  </div>
</template>

<style>
body {
  background: #f0f0f0;
}
</style>

<style scoped>
.app {
  display: flex;
  flex-direction: column;
  min-height: 100vh;
  background: #f0f0f0;
  color: #000;
  font: 19px/24px 'Noto Sans', sans-serif;
  overflow: hidden;
}
.app * {
  box-sizing: border-box;
}
button {
  font: inherit;
  color: inherit;
  border: 0;
  padding: 0;
  background: none;
}
input,
select {
  font: inherit;
  color: inherit;
}
.ico {
  display: block;
  flex: none;
  width: 24px;
  height: 24px;
  overflow: visible;
}

.titlebar {
  position: relative;
  display: flex;
  align-items: center;
  height: 34px;
  background: #fff;
}
.progress {
  position: absolute;
  top: 0;
  left: 780px;
  display: flex;
}
.progress i {
  height: 2px;
}
.done {
  width: 70px;
  background: #2be02b;
}
.rest {
  width: 291px;
  background: #e5e5e5;
}
.logo {
  width: 20px;
  height: 20px;
  margin-left: 4px;
}
h1 {
  flex: 1;
  margin: 0 0 0 7px;
  font: 19px/24px 'Noto Sans', sans-serif;
}
.win {
  display: flex;
}
.win button {
  display: flex;
  align-items: center;
  justify-content: center;
  width: 70px;
}
.win svg {
  width: 16px;
  height: 16px;
}

.menubar {
  display: flex;
  gap: 12px;
  height: 28px;
  padding-left: 7px;
  align-items: center;
  background: #fff;
}

.toolbar {
  display: flex;
  align-items: center;
  flex: none;
}
.top {
  height: 42px;
}
.tool {
  display: flex;
  justify-content: center;
  flex: none;
  width: 28px;
}
.dim {
  opacity: 0.28;
}
.dimArrow {
  opacity: 0.7;
}
.caret {
  flex: none;
  width: 10px;
  height: 4px;
  background: #000;
  clip-path: polygon(10% 0, 90% 0, 50% 100%);
}
.handle {
  flex: none;
  width: 15px;
  height: 22px;
  background: repeating-linear-gradient(#555 0 2px, transparent 2px 6px) no-repeat 9px 0 / 2px 22px;
}
.top .handle:first-child {
  width: 13px;
  background-position-x: 7px;
}
.sep {
  flex: none;
  width: 12px;
  height: 34px;
  background: linear-gradient(#999, #999) no-repeat 5px 0 / 1px 100%;
}
.bottom .handle + .tool,
.bottom .handle + .combo {
  margin-left: 1px;
}
.bottom .handle:first-child + .tool {
  margin-left: 0;
}
.bottom .sep {
  width: 16px;
  height: 26px;
  background-position-x: 7px;
}
.gap {
  flex: none;
  width: 2px;
}
.pager {
  display: flex;
  align-items: center;
  margin: 0 37px 10px auto;
  font: 16px/20px 'Liberation Sans', sans-serif;
}
.pager input {
  width: 50px;
  height: 27px;
  border: 1px solid #b0bcc6;
  background: #fff;
  text-align: right;
  padding: 0 3px;
}
.pager label {
  margin-left: 2px;
}

.main {
  display: flex;
  flex: 1;
  border-right: 1px solid #000;
  margin: 1px 3px 0 0;
}
.browser {
  display: flex;
  flex-direction: column;
  width: 353px;
  flex: none;
  padding: 0 6px 0 2px;
  border-right: 1px solid #000;
  font: 15px/20px 'Liberation Mono', monospace;
}
.tabs {
  display: flex;
  height: 21px;
}
.tab {
  display: flex;
  gap: 4px;
  padding: 3px 1px 0 0;
  border: 1px solid #aebcc8;
  border-bottom: 0;
  line-height: 18px;
}
.tab.on {
  background: #fff;
  width: 64px;
}
.tab:last-child {
  width: 54px;
}
.x {
  font-size: 16px;
}
.frame {
  display: flex;
  flex-direction: column;
  flex: 1;
  border: 1px solid #aebcc8;
  border-width: 1px 1px 2px;
}
.views {
  display: flex;
  height: 37px;
  padding: 1px 0 0 1px;
}
.views button {
  width: 30px;
  height: 30px;
  padding: 2px;
  border: 1px solid transparent;
}
.views .sel {
  background: #ffc485;
  border-color: #999;
}
.search {
  display: flex;
  align-items: center;
  height: 25px;
  background: #fff;
  border: 1px solid #aebcc8;
  border-width: 1px 0;
}
.search input {
  flex: 1;
  border: 0;
  outline: 0;
  padding: 0 5px;
  background: none;
  font: 16px/20px 'Liberation Sans', sans-serif;
}
.search input::placeholder {
  color: #777;
}
.search svg {
  width: 13px;
  height: 13px;
  margin-right: 2px;
}
.filters {
  display: flex;
  align-items: center;
  height: 40px;
  padding-top: 3px;
}
.filters .tool {
  width: 30px;
}
.filters .narrow {
  width: 26px;
}
.filters .caret {
  height: 5px;
  clip-path: polygon(0 0, 100% 0, 50% 100%);
}
.push {
  flex: 1;
}
.tree {
  flex: 1;
  background: #fff;
}
table {
  width: 100%;
  border-collapse: collapse;
  table-layout: fixed;
}
.cId {
  width: 26px;
}
.cColor {
  width: 24px;
}
.cInc {
  width: 64px;
}
th {
  height: 25px;
  padding: 4px 2px 0;
  text-align: left;
  font-weight: normal;
  background: #f0f0f0;
  border: 1px solid #aebcc8;
  border-width: 1px 1px 1px 0;
}
.tree th:last-child {
  border-right: 0;
  padding-left: 0;
  padding-right: 0;
}
td {
  height: 26px;
  padding: 0 2px;
}
.r {
  text-align: right;
}
.id {
  padding-right: 4px;
}
.inc {
  padding-right: 1px;
}
.c {
  text-align: center;
}
.mini {
  flex: none;
  width: 16px;
  height: 16px;
  overflow: visible;
  vertical-align: middle;
}
.c .mini {
  display: block;
  margin: auto;
}
.node {
  display: flex;
  align-items: center;
  gap: 5px;
  white-space: pre;
}
.root {
  padding-left: 3px;
}
.root .mini {
  margin-left: 5px;
}
.leaf {
  padding-left: 40px;
  gap: 3px;
  background: linear-gradient(#999, #999) no-repeat 29px 50% / 8px 1px, linear-gradient(#999, #999) no-repeat 29px 0 / 1px 50%;
}
.leaf .mini {
  width: 15px;
  height: 15px;
}
.leaf .mini:last-of-type {
  margin-right: 3px;
}
.twist {
  width: 6px;
  height: 8px;
  background: #999;
  clip-path: polygon(20% 0, 100% 50%, 20% 100%);
}
.twist.open {
  height: 5px;
  background: #222;
  clip-path: polygon(0 0, 100% 0, 50% 100%);
}
.swatch {
  display: block;
  width: 14px;
  height: 14px;
  border: 1px solid #000;
}
.hscroll {
  display: flex;
  height: 17px;
  background: #fff;
  border: 1px solid #aebcc8;
  border-width: 1px 0;
}
.hscroll button {
  width: 16px;
  line-height: 14px;
  color: #444;
  background: #f0f0f0;
}
.hscroll i {
  width: 267px;
  margin-right: auto;
  border: 1px solid #aebcc8;
  border-width: 0 1px;
  background: #f0f0f0;
}
.splitter {
  display: flex;
  justify-content: center;
  align-items: center;
  height: 15px;
  line-height: 12px;
  color: #666;
}
.splitter span {
  margin: -6px auto 0;
}
.splitter b {
  width: 16px;
  font-size: 12px;
  transform: rotate(90deg);
}
.props th {
  height: 30px;
  border-width: 1px 0;
  font: 19px/24px 'Noto Sans', sans-serif;
}
.props th:first-child {
  width: 201px;
}
.propsBody {
  height: 270px;
  background: #fff;
}

.work {
  display: flex;
  flex-direction: column;
  flex: 1;
  min-width: 0;
}
.canvasRow {
  display: flex;
  flex: 1;
  padding: 24px 7px 0 0;
}
.sidebar {
  display: flex;
  flex-direction: column;
  align-items: center;
  width: 36px;
  margin-right: 6px;
}
.dots {
  width: 20px;
  height: 2px;
  margin: 7px 0 5px;
  background: repeating-linear-gradient(90deg, #444 0 2px, transparent 2px 6px);
}
.sidebar button {
  display: flex;
  align-items: center;
  justify-content: center;
  width: 27px;
  height: 28px;
}
.sidebar .ico {
  width: 22px;
  height: 22px;
}
.sidebar .sel {
  background: linear-gradient(135deg, #fde3c4, #fbb468);
  border: 1px solid #8c8c8c;
  box-shadow: inset 0 0 0 1px #fff;
}
.viewport {
  position: relative;
  flex: 1;
  border: 1px solid #17e4ee;
  background: linear-gradient(#2a5580, #66788f 48%, #848f99 72%, #a1a1a1);
  overflow: hidden;
}
.scene {
  position: absolute;
  inset: 0;
  width: 100%;
  height: 100%;
}
.info {
  position: relative;
  margin: 6px 6px 0;
  text-align: right;
  color: #fff;
  font-size: 20px;
}

.bottom {
  height: 38px;
  padding-left: 1px;
}
.combo {
  position: relative;
  display: flex;
  align-items: center;
  height: 33px;
  flex: none;
}
.combo .ico {
  position: absolute;
  left: 1px;
  width: 20px;
  height: 24px;
  pointer-events: none;
}
.combo select {
  appearance: none;
  width: 100%;
  height: 100%;
  padding: 0 20px;
  border: 1px solid #fff;
  border-radius: 0;
  background: linear-gradient(90deg, #fff calc(100% - 20px), #f0f0f0 0);
  font: 16px/20px 'Liberation Sans', sans-serif;
}
.combo .caret {
  position: absolute;
  right: 6px;
  height: 5px;
  pointer-events: none;
}

.panel {
  display: flex;
  border-top: 2px solid #909090;
  margin: 8px 5px 3px 2px;
  padding: 26px 23px 22px 0;
  border-bottom: 1px solid #000;
  font-size: 20px;
}
.col {
  display: flex;
  flex-direction: column;
}
.one {
  width: 308px;
  margin-right: 44px;
}
.two {
  width: 483px;
  margin-right: 23px;
}
.three {
  width: 338px;
}
.four {
  width: 146px;
  margin-left: auto;
}
.line {
  display: flex;
  align-items: flex-start;
  height: 30px;
  line-height: 26px;
}
.grow {
  flex: 1;
}
.end {
  justify-content: flex-end;
}
.pad {
  width: 22px;
}
.btn {
  height: 30px;
  padding: 0 0 4px 4px;
  border: 1px solid;
  border-color: #fff #777 #777 #fff;
  border-bottom-width: 2px;
  background: #f0f0f0;
  line-height: 24px;
}
.sw {
  display: flex;
  align-items: center;
  justify-content: center;
  width: 44px;
  padding: 0;
}
.down {
  width: 15px;
  height: 8px;
  background: #000;
  clip-path: polygon(0 0, 100% 0, 50% 100%);
}
.updown {
  width: 12px;
  height: 15px;
  background: linear-gradient(#000 7px, #f0f0f0 7px 8px, #000 8px);
  clip-path: polygon(50% 0, 100% 45%, 100% 55%, 50% 100%, 0 55%, 0 45%);
}
.reset {
  width: 16px;
  height: 16px;
}
.surfs {
  width: 220px;
  background: #e6e664;
  border: 2px solid #00ffff;
}
.qi {
  width: 219px;
}
.eq {
  margin-left: 24px;
}
.num {
  width: 218px;
  height: 29px;
  margin-top: 1px;
  border: 1px solid;
  border-color: #777 #fff #fff #777;
  padding: 0;
  border-radius: 0;
  background: #fff;
  text-align: right;
}
.trias {
  position: relative;
  width: 219px;
}
.tri {
  position: absolute;
  left: 4px;
  top: 5px;
  width: 20px;
  height: 19px;
}
.criteria {
  width: 219px;
}
.green {
  background: #60c060;
  border-color: #8ee08e #2c7a2c #2c7a2c #8ee08e;
}
.red {
  background: #c06060;
  border-color: #e08e8e #7a2c2c #7a2c2c #e08e8e;
}
.short {
  width: 125px;
}
.focus {
  border: 2px solid #111;
  box-shadow: inset 0 0 0 1px #60c060;
}
.radio input {
  appearance: none;
  width: 20px;
  height: 20px;
  margin: 5px 12px 0 13px;
  border: 1px solid;
  border-color: #222 #fff #fff #222;
  border-radius: 50%;
  background: #fff;
}
.radio input:checked {
  background: radial-gradient(circle, #000 4px, #fff 5px);
}
.check {
  padding-left: 11px;
}
.check input {
  appearance: none;
  width: 22px;
  height: 22px;
  margin: 5px 13px 0 0;
  border: 1px solid;
  border-color: #666 #fff #fff #666;
  background: #fff;
}
.check input:checked::after {
  content: '';
  display: block;
  width: 13px;
  height: 7px;
  margin: 5px 0 0 4px;
  border: solid #000;
  border-width: 0 0 2px 2px;
  transform: rotate(-45deg);
}
.feature {
  padding-left: 45px;
}

.status {
  display: flex;
  align-items: flex-end;
  gap: 2px;
  height: 27px;
  font: 16px/20px 'Liberation Sans', sans-serif;
}
.status p {
  flex: 1;
  margin: 0 0 1px 4px;
}
.cell {
  height: 24px;
  border: 1px solid;
  border-top-width: 2px;
  border-color: #222 #fff #f0f0f0 #222;
  padding: 2px 1px 0;
}
.a {
  width: 139px;
}
.b {
  width: 153px;
}
.edge {
  display: flex;
  height: 2px;
  background: #484848;
}
.d1 {
  width: 72px;
}
.l1 {
  width: 516px;
  background: #bdbdbd;
}
.d2 {
  width: 380px;
}
.l2 {
  width: 73px;
  background: #777;
}
</style>
